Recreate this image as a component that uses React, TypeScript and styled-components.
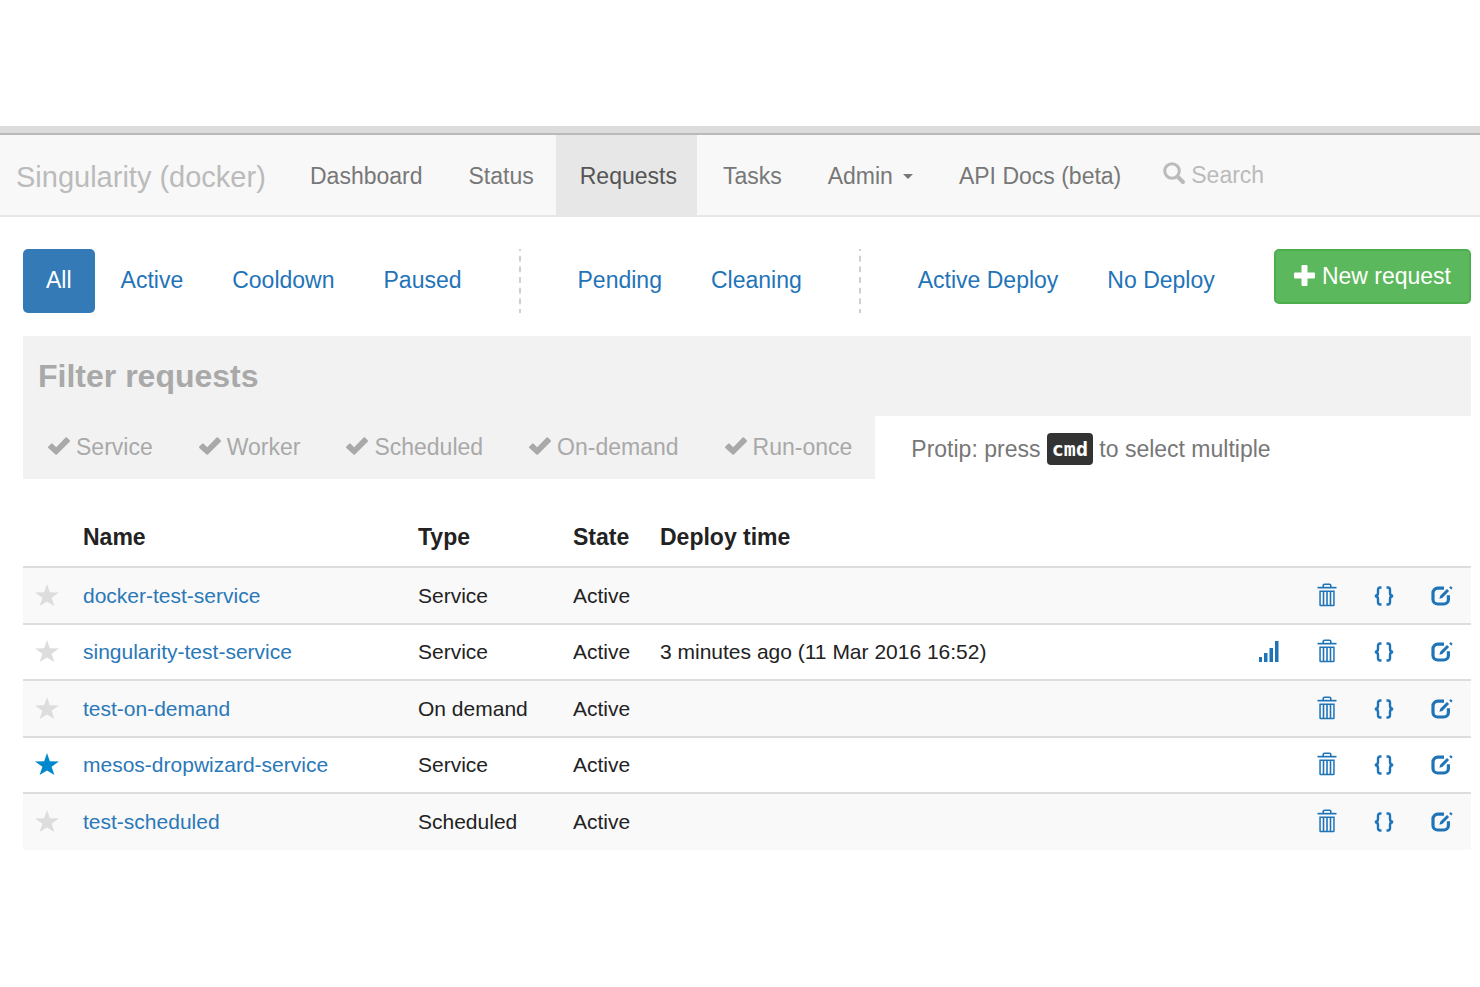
import React, { useState } from 'react';
import styled, { createGlobalStyle } from 'styled-components';

const GlobalStyle = createGlobalStyle`
  *, *::before, *::after { box-sizing: border-box; }
  body {
    margin: 0;
    background: #fff;
    color: #222;
    font-family: "Liberation Sans", Arial, sans-serif;
    font-size: 23px;
    line-height: 32px;
  }
  a { text-decoration: none; }
  button { font: inherit; cursor: pointer; }
`;

const Page = styled.div`
  padding-top: 126px;
  min-width: 1280px;
`;

const WindowEdge = styled.div`
  height: 9px;
  background: #dcdcdc;
  border-bottom: 2px solid #bababa;
`;

const Navbar = styled.nav`
  display: flex;
  align-items: stretch;
  gap: 2px;
  height: 82px;
  padding-left: 16px;
  background: #f8f8f8;
  border-bottom: 2px solid #e7e7e7;
`;

const Brand = styled.a`
  width: 268px;
  padding-top: 26px;
  color: #bbb;
  font-size: 29px;
  white-space: nowrap;
`;

const NavLink = styled.a<{ $active?: boolean }>`
  display: flex;
  align-items: center;
  gap: 10px;
  padding: 2px 20px 0 24px;
  color: ${(p) => (p.$active ? '#555' : '#777')};
  background: ${(p) => (p.$active ? '#e7e7e7' : 'transparent')};
  white-space: nowrap;
`;

const Caret = styled.span`
  border: 5px solid transparent;
  border-top-color: currentColor;
  border-bottom: 0;
`;

const SearchButton = styled.button`
  display: flex;
  align-items: center;
  gap: 5px;
  padding: 0 20px;
  border: 0;
  background: none;
  color: #bbb;
`;

const Content = styled.main`
  padding: 32px 9px 0 23px;
`;

const Toolbar = styled.div`
  display: flex;
  align-items: flex-start;
  justify-content: space-between;
`;

const Pills = styled.div`
  display: flex;
  gap: 34px;
`;

const PillGroup = styled.div`
  display: flex;
  gap: 3px;
`;

const Pill = styled.a<{ $active?: boolean }>`
  padding: 15px 23px 17px;
  border-radius: 5px;
  color: ${(p) => (p.$active ? '#fff' : '#1f74b8')};
  background: ${(p) => (p.$active ? '#337ab7' : 'transparent')};
  white-space: nowrap;
`;

const Divider = styled.div`
  width: 2px;
  background: linear-gradient(#d0d0d0 17%, transparent 17% 66%, #d0d0d0 66%) 0 0 / 100% calc(100% / 6);
`;

const NewButton = styled.button`
  display: flex;
  align-items: center;
  gap: 7px;
  height: 55px;
  padding: 0 18px 2px;
  border: 2px solid #4cae4c;
  border-radius: 5px;
  background: #5cb85c;
  color: #fff;
  white-space: nowrap;
`;

const FilterPanel = styled.section`
  margin-top: 23px;
`;

const FilterInput = styled.input`
  display: block;
  width: 100%;
  height: 80px;
  padding: 0 15px;
  border: 0;
  background: #f2f2f2;
  color: #a9a9a9;
  font: bold 32px "Liberation Sans", Arial, sans-serif;
  &::placeholder { color: #a9a9a9; opacity: 1; }
`;

const FilterRow = styled.div`
  display: flex;
`;

const FilterTypes = styled.div`
  display: flex;
  height: 63px;
  padding-left: 2px;
  background: #f2f2f2;
`;

const TypeToggle = styled.button`
  display: flex;
  align-items: center;
  gap: 6px;
  padding: 0 23px 2px;
  border: 0;
  background: none;
  color: #a9a9a9;
  white-space: nowrap;
`;

const Protip = styled.p`
  margin: 0;
  padding: 17px 0 0 36px;
  color: #777;
  white-space: nowrap;
`;

const Key = styled.kbd`
  display: inline-block;
  padding: 0 5px;
  border-radius: 4px;
  background: #333;
  color: #fff;
  font: bold 20px/32px "DejaVu Sans Mono", monospace;
  vertical-align: top;
`;

const Table = styled.table`
  width: 100%;
  border-collapse: collapse;
  table-layout: fixed;
  margin-top: 31px;
  font-size: 21px;
`;

const Col = styled.col<{ $w?: number }>`
  width: ${(p) => (p.$w ? p.$w + 'px' : 'auto')};
`;

const HeadCell = styled.th`
  height: 57px;
  padding: 0 13px 2px;
  color: #222;
  font-size: 23px;
  text-align: left;
`;

const Row = styled.tr`
  height: 57px;
  border-top: 2px solid #ddd;
  &:nth-child(even) { height: 56px; }
  &:nth-child(odd) { background: #f9f9f9; }
`;

const Cell = styled.td`
  padding: 0 13px;
  color: #222;
  white-space: nowrap;
`;

const IconCell = styled.td`
  padding: 0;
`;

const NameLink = styled.a`
  color: #2a78b8;
`;

const IconButton = styled.button<{ $color?: string }>`
  display: flex;
  margin: 0 auto;
  padding: 0;
  border: 0;
  background: none;
  color: ${(p) => p.$color || '#1f74b8'};
`;

const Icon = styled.svg`
  flex: none;
  display: block;
  fill: currentColor;
`;

const SearchIcon = () => (
  <Icon width="23" height="26" viewBox="0 0 23 26">
    <circle cx="9" cy="9" r="7.300" fill="none" stroke="currentColor" strokeWidth="3" />
    <path d="M14.500 14.500l5.500 5.500" fill="none" stroke="currentColor" strokeWidth="4" strokeLinecap="round" />
  </Icon>
);

const PlusIcon = () => (
  <Icon width="21" height="22" viewBox="0 0 21 22">
    <path d="M8.500 0h4a1 1 0 0 1 1 1v6.500H20a1 1 0 0 1 1 1v4a1 1 0 0 1-1 1h-6.500V20a1 1 0 0 1-1 1h-4a1 1 0 0 1-1-1v-6.500H1a1 1 0 0 1-1-1v-4a1 1 0 0 1 1-1h6.500V1a1 1 0 0 1 1-1z" />
  </Icon>
);

const CheckIcon = () => (
  <Icon width="22" height="22" viewBox="0 0 22 22">
    <path d="M.3 10.600l2.900-2.900a1 1 0 0 1 1.400 0L8.200 11.200 17.600 1.600a1 1 0 0 1 1.400 0l2.700 2.700a1 1 0 0 1 0 1.400L8.900 18.400a1 1 0 0 1-1.400 0L.3 12a1 1 0 0 1 0-1.400z" />
  </Icon>
);

const StarIcon = () => (
  <Icon width="24" height="24" viewBox="0 0 24 24">
    <path d="M12 0l2.800 8.300 9.200.1-7.400 5.400L19.400 22 12 17.400 4.600 22l2.800-8.200L0 8.400l9.200-.1z" />
  </Icon>
);

const SignalIcon = () => (
  <Icon width="21" height="24" viewBox="0 0 21 24">
    <path d="M1 17h3v5H1zM6 13h3.500v9H6zM11.500 8H15v14h-3.500zM17 1h3.500v21H17z" />
  </Icon>
);

const TrashIcon = () => (
  <Icon width="20" height="26" viewBox="0 0 20 26">
    <path d="M6.200 4V2.600Q6.200 1.200 7.600 1.200H12.400Q13.800 1.200 13.800 2.600V4" fill="none" stroke="currentColor" strokeWidth="1.600" />
    <path d="M.5 3.800h19v1.700H.5z" />
    <path
      fillRule="evenodd"
      d="M2.300 7.500H17.700V22Q17.700 23.300 16.400 23.300H3.600Q2.300 23.300 2.300 22zM3.800 9v12.800h1.900V9zM7.300 9v12.800h1.900V9zM10.800 9v12.800h1.900V9zM14.300 9v12.800h1.900V9z"
    />
  </Icon>
);

const BracesIcon = () => (
  <Icon width="20" height="20" viewBox="0 0 20 20">
    <path
      fill="none"
      stroke="currentColor"
      strokeWidth="2.400"
      d="M7.500 1.500H6.200Q4 1.500 4 3.700V7Q4 10 .8 10 4 10 4 13v3.300Q4 18.500 6.200 18.500H7.500M12.500 1.500h1.300Q16 1.500 16 3.700V7q0 3 3.200 3Q16 10 16 13v3.300q0 2.200-2.200 2.200H12.500"
    />
  </Icon>
);

const EditIcon = () => (
  <Icon width="22" height="20" viewBox="0 0 22 20">
    <path
      fill="none"
      stroke="currentColor"
      strokeWidth="3.200"
      d="M13 2.200H6.600A4.600 4.600 0 0 0 2 6.800V13.400A4.600 4.600 0 0 0 6.600 18H12.800A4.600 4.600 0 0 0 17.400 13.400V9.200"
    />
    <path d="M8.400 12.700l.8-2.900L16 3l2.100 2.100L11.300 11.900zM18.200 1.600L19.200.5q.5-.4 1 0L21.200 1.500q.5.500 0 1L20.200 3.600z" />
  </Icon>
);

const nav = ['Dashboard', 'Status', 'Requests', 'Tasks', 'Admin', 'API Docs (beta)'];
const stateGroups = [
  ['All', 'Active', 'Cooldown', 'Paused'],
  ['Pending', 'Cleaning'],
  ['Active Deploy', 'No Deploy'],
];
const types = ['Service', 'Worker', 'Scheduled', 'On-demand', 'Run-once'];
const columns = [47, 335, 155, 87, undefined, 59, 57, 57, 59];

type Request = { name: string; type: string; deployed?: string; starred?: boolean };
const requests: Request[] = [
  { name: 'docker-test-service', type: 'Service' },
  { name: 'singularity-test-service', type: 'Service', deployed: '3 minutes ago (11 Mar 2016 16:52)' },
  { name: 'test-on-demand', type: 'On demand' },
  { name: 'mesos-dropwizard-service', type: 'Service', starred: true },
  { name: 'test-scheduled', type: 'Scheduled' },
];

export default function App() {
  const [filter, setFilter] = useState('');
  return (
    <>
      <GlobalStyle />
      <Page>
        <WindowEdge />
        <Navbar>
          <Brand href="#">Singularity (docker)</Brand>
          {nav.map((label) => (
            <NavLink key={label} href="#" $active={label === 'Requests'}>
              {label}
              {label === 'Admin' && <Caret />}
            </NavLink>
          ))}
          <SearchButton type="button">
            <SearchIcon />
            Search
          </SearchButton>
        </Navbar>
        <Content>
          <Toolbar>
            <Pills>
              {stateGroups.map((group, i) => (
                <React.Fragment key={group[0]}>
                  {i > 0 && <Divider />}
                  <PillGroup>
                    {group.map((label) => (
                      <Pill key={label} href="#" $active={label === 'All'}>
                        {label}
                      </Pill>
                    ))}
                  </PillGroup>
                </React.Fragment>
              ))}
            </Pills>
            <NewButton type="button">
              <PlusIcon />
              New request
            </NewButton>
          </Toolbar>
          <FilterPanel>
            <FilterInput
              type="text"
              aria-label="Filter requests"
              placeholder="Filter requests"
              value={filter}
              onChange={(e) => setFilter(e.target.value)}
            />
            <FilterRow>
              <FilterTypes>
                {types.map((label) => (
                  <TypeToggle key={label} type="button" aria-pressed="true">
                    <CheckIcon />
                    {label}
                  </TypeToggle>
                ))}
              </FilterTypes>
              <Protip>
                Protip: press <Key>cmd</Key> to select multiple
              </Protip>
            </FilterRow>
          </FilterPanel>
          <Table>
            <colgroup>
              {columns.map((w, i) => (
                <Col key={i} $w={w} />
              ))}
            </colgroup>
            <thead>
              <tr>
                <HeadCell aria-label="Starred" />
                <HeadCell>Name</HeadCell>
                <HeadCell>Type</HeadCell>
                <HeadCell>State</HeadCell>
                <HeadCell>Deploy time</HeadCell>
                <HeadCell colSpan={4} aria-label="Actions" />
              </tr>
            </thead>
            <tbody>
              {requests
                .filter((r) => r.name.includes(filter))
                .map((r) => (
                  <Row key={r.name}>
                    <IconCell>
                      <IconButton type="button" aria-label="Star" $color={r.starred ? '#0088cc' : '#ddd'}>
                        <StarIcon />
                      </IconButton>
                    </IconCell>
                    <Cell>
                      <NameLink href="#">{r.name}</NameLink>
                    </Cell>
                    <Cell>{r.type}</Cell>
                    <Cell>Active</Cell>
                    <Cell>{r.deployed}</Cell>
                    <IconCell>
                      {r.deployed && (
                        <IconButton type="button" aria-label="Scale">
                          <SignalIcon />
                        </IconButton>
                      )}
                    </IconCell>
                    <IconCell>
                      <IconButton type="button" aria-label="Remove">
                        <TrashIcon />
                      </IconButton>
                    </IconCell>
                    <IconCell>
                      <IconButton type="button" aria-label="View JSON">
                        <BracesIcon />
                      </IconButton>
                    </IconCell>
                    <IconCell>
                      <IconButton type="button" aria-label="Edit">
                        <EditIcon />
                      </IconButton>
                    </IconCell>
                  </Row>
                ))}
            </tbody>
          </Table>
        </Content>
      </Page>
    </>
  );
}
